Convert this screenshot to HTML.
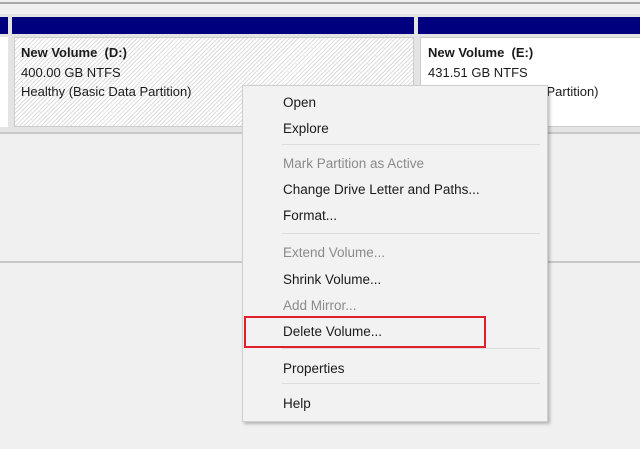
<!DOCTYPE html>
<html><head><style>
body{margin:0;width:640px;height:449px;background:#f0f0f0;position:relative;overflow:hidden;font-family:"Liberation Sans",sans-serif;}
.a{position:absolute}
.t{font-size:13px;color:#1a1a1a;white-space:nowrap}
.m{position:absolute;left:283px;font-size:13.5px;color:#1a1a1a;white-space:nowrap}
.g{color:#8a8a8a}
.s{position:absolute;left:282px;width:258px;height:1px;background:#dcdcdc}
</style></head><body>
<div class="a" style="left:0;top:2px;width:640px;height:2px;background:#a8a8a8"></div>
<div class="a" style="left:0;top:4px;width:640px;height:10px;background:#f0f0f0"></div>
<div class="a" style="left:0;top:14px;width:640px;height:118px;background:#e4e4e4"></div>
<div class="a" style="left:0;top:17px;width:8px;height:17px;background:#00007f"></div>
<div class="a" style="left:12px;top:17px;width:402px;height:17px;background:#00007f"></div>
<div class="a" style="left:418px;top:17px;width:222px;height:17px;background:#00007f"></div>
<div class="a" style="left:0;top:37px;width:8px;height:90px;background:#fff"></div>
<div class="a" style="left:14px;top:37px;width:398px;height:88px;background:repeating-linear-gradient(135deg,#fff 0 2px,#dcdcdc 2px 3px);border:1px solid #ccc"></div>
<div class="a" style="left:420px;top:37px;width:220px;height:88px;background:#fff;border:1px solid #ccc"></div>
<div class="a" style="left:0;top:132px;width:640px;height:2px;background:#c8c8c8"></div>
<div class="a" style="left:0;top:261px;width:640px;height:2px;background:#c8c8c8"></div>
<div class="a t" style="left:21px;top:45px;font-weight:bold">New Volume&nbsp; (D:)</div>
<div class="a t" style="left:21px;top:65px">400.00 GB NTFS</div>
<div class="a t" style="left:21px;top:84px">Healthy (Basic Data Partition)</div>
<div class="a t" style="left:428px;top:45px;font-weight:bold">New Volume&nbsp; (E:)</div>
<div class="a t" style="left:428px;top:65px">431.51 GB NTFS</div>
<div class="a t" style="left:428px;top:84px">Healthy (Basic Data Partition)</div>
<div class="a" style="left:242px;top:85px;width:304px;height:335px;background:#f2f2f2;border:1px solid #cfcfcf;box-shadow:2px 2px 3px rgba(0,0,0,.25)"></div>
<div class="m" style="top:95px">Open</div>
<div class="m" style="top:121px">Explore</div>
<div class="s" style="top:144px"></div>
<div class="m g" style="top:156px">Mark Partition as Active</div>
<div class="m" style="top:182px">Change Drive Letter and Paths...</div>
<div class="m" style="top:208px">Format...</div>
<div class="s" style="top:233px"></div>
<div class="m g" style="top:245px">Extend Volume...</div>
<div class="m" style="top:272px">Shrink Volume...</div>
<div class="m g" style="top:298px">Add Mirror...</div>
<div class="m" style="top:324px">Delete Volume...</div>
<div class="a" style="left:244px;top:316px;width:238px;height:28px;border:2px solid #e0202a"></div>
<div class="s" style="top:348px"></div>
<div class="m" style="top:361px">Properties</div>
<div class="s" style="top:383px"></div>
<div class="m" style="top:396px">Help</div>
</body></html>
